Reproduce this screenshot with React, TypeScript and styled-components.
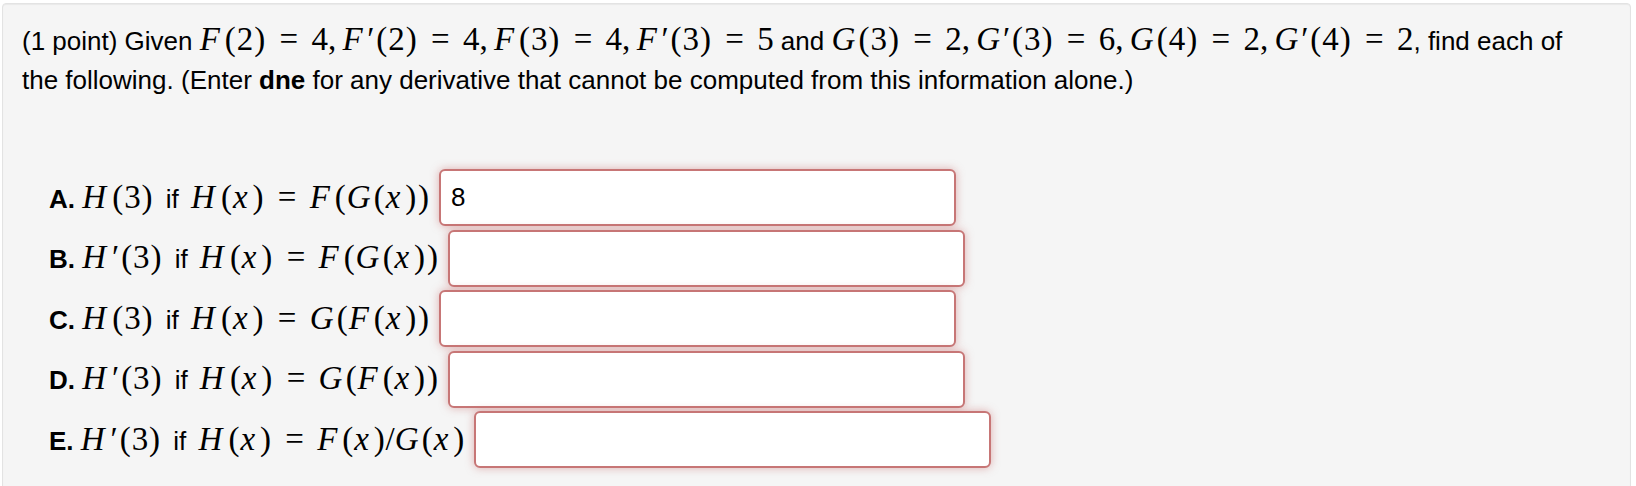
import React from "react";
import styled, { createGlobalStyle } from "styled-components";

const GlobalStyle = createGlobalStyle`
  html, body {
    margin: 0;
    padding: 0;
    background: #ffffff;
  }
  body {
    font-family: "Liberation Sans", Arial, sans-serif;
    color: #000;
  }
`;

const Well = styled.div`
  margin: 3px 5px 0 2px;
  min-height: 520px;
  box-sizing: border-box;
  padding: 18px 19px 0 19px;
  background: #f5f5f5;
  border: 1px solid #e3e3e3;
  border-radius: 4px;
  box-shadow: inset 0 1px 1px rgba(0, 0, 0, 0.05);
`;

const Statement = styled.p`
  margin: 0;
  font-size: 26px;
  line-height: 39px;
`;

const MathBox = styled.span`
  font-family: "Liberation Serif", "Times New Roman", serif;
  font-size: 33px;
  line-height: 1;
  white-space: nowrap;
`;

// italic variable, padded out to the width of the TeX glyph
const V = styled.i<{ $pad: number }>`
  font-style: italic;
  padding-right: ${(p) => p.$pad}em;
`;

const Paren = styled.span`
  padding: 0 0.028em;
`;

const Rel = styled.span`
  margin: 0 0.405em;
`;

const Comma = styled.span`
  margin-right: 0.19em;
`;

const Prime = styled.span`
  margin: 0 0.03em 0 0.02em;
`;

const pads: Record<string, number> = { F: 0.12, G: 0.07, H: 0.16, x: 0.12 };

// tiny renderer for the few bits of TeX-like math in the problem
const MathText = ({ src }: { src: string }) => (
  <MathBox>
    {[...src].map((c, i) => {
      if (/[A-Za-z]/.test(c)) {
        return (
          <V key={i} $pad={pads[c] ?? 0.08}>
            {c}
          </V>
        );
      }
      if (c === "(" || c === ")") return <Paren key={i}>{c}</Paren>;
      if (c === "=") return <Rel key={i}>=</Rel>;
      if (c === ",") return <Comma key={i}>,</Comma>;
      if (c === "'") return <Prime key={i}>′</Prime>;
      return <React.Fragment key={i}>{c}</React.Fragment>;
    })}
  </MathBox>
);

const Parts = styled.div`
  display: flex;
  flex-direction: column;
  gap: 3.5px;
  margin-top: 69px;
  padding-left: 27px;
`;

const Row = styled.div`
  display: flex;
  align-items: center;
  height: 57px;
  font-size: 26px;
`;

const Label = styled.span`
  white-space: nowrap;
`;

const Letter = styled.b`
  font-weight: 700;
`;

const Word = styled.span`
  margin: 0 5px;
`;

const Answer = styled.input`
  box-sizing: border-box;
  width: 517px;
  height: 57px;
  margin-left: 9px;
  padding: 0 10px;
  font-family: "Liberation Sans", Arial, sans-serif;
  font-size: 26px;
  color: #000;
  background: #ffffff;
  border: 2px solid #c77676;
  border-radius: 6px;
  box-shadow: 0 0 9px rgba(200, 105, 105, 0.5);
  outline: none;
`;

type Part = {
  letter: string;
  at: string;
  rule: string;
  value?: string;
};

const parts: Part[] = [
  { letter: "A.", at: "H(3)", rule: "H(x)=F(G(x))", value: "8" },
  { letter: "B.", at: "H'(3)", rule: "H(x)=F(G(x))" },
  { letter: "C.", at: "H(3)", rule: "H(x)=G(F(x))" },
  { letter: "D.", at: "H'(3)", rule: "H(x)=G(F(x))" },
  { letter: "E.", at: "H'(3)", rule: "H(x)=F(x)/G(x)" },
];

const App = () => {
  return (
    <>
      <GlobalStyle />
      <Well>
        <Statement>
          (1 point) Given <MathText src="F(2)=4,F'(2)=4,F(3)=4,F'(3)=5" /> and{" "}
          <MathText src="G(3)=2,G'(3)=6,G(4)=2,G'(4)=2" />, find each of
          <br />
          the following. (Enter <b>dne</b> for any derivative that cannot be
          computed from this information alone.)
        </Statement>

        <Parts>
          {parts.map((p) => (
            <Row key={p.letter}>
              <Label>
                <Letter>{p.letter}</Letter> <MathText src={p.at} />{" "}
                <Word>if</Word> <MathText src={p.rule} />
              </Label>
              <Answer
                type="text"
                defaultValue={p.value ?? ""}
                aria-label={`answer ${p.letter}`}
              />
            </Row>
          ))}
        </Parts>
      </Well>
    </>
  );
};

export default App;
